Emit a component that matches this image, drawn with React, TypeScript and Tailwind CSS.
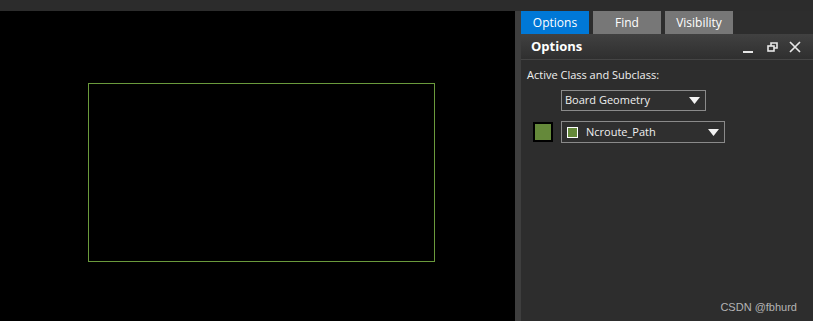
const ui = { fontFamily: '"Open Sans", "Noto Sans", sans-serif' }

function Caret() {
  return (
    <svg width="11" height="7" viewBox="0 0 11 7" className="shrink-0">
      <path d="M0 0 H11 L5.5 7 Z" fill="#f2f2f2" />
    </svg>
  )
}

function WindowButtons() {
  return (
    <div className="flex items-center text-[#e6e6e6]">
      <svg width="11" height="12" viewBox="0 0 11 12">
        <rect x="0" y="10" width="10" height="2" fill="currentColor" />
      </svg>
      <svg width="12" height="12" viewBox="0 0 12 12" fill="none" stroke="currentColor" strokeWidth="1.6" className="ml-[13px]">
        <rect x="1" y="5" width="6" height="5" />
        <path d="M4 5 V2 H10 V7 H7" />
      </svg>
      <svg width="12" height="12" viewBox="0 0 12 12" stroke="currentColor" strokeWidth="1.7" className="ml-[10px]">
        <path d="M1 1 L11 11 M11 1 L1 11" />
      </svg>
    </div>
  )
}

const tabs = ['Options', 'Find', 'Visibility']

export default function App() {
  return (
    <div className="relative flex h-[321px] w-[813px] flex-col overflow-hidden bg-[#2d2d2d]" style={ui}>
      <div className="h-[11px] shrink-0 bg-[#2c2c2c]" />

      <div className="flex min-h-0 flex-1">
        {/* drawing canvas */}
        <div className="w-[515px] shrink-0 bg-black pl-[88px] pt-[72px]">
          <div className="h-[179px] w-[347px] border border-[#6a9a3c]" />
        </div>

        <div className="w-[6px] shrink-0 bg-[#3e3e3e]" />

        {/* options panel */}
        <div className="flex flex-1 flex-col bg-[#2d2d2d]">
          <div className="flex h-[23px] shrink-0 gap-[4px]">
            {tabs.map((t, i) => (
              <div
                key={t}
                className={
                  'flex w-[68px] items-center justify-center text-[12px] text-white ' +
                  (i === 0 ? 'bg-[#0078d7]' : 'bg-[#777777]')
                }
              >
                {t}
              </div>
            ))}
          </div>

          <div className="flex h-[26px] shrink-0 items-center justify-between border-b border-[#454545] bg-gradient-to-b from-[#414141] to-[#2f2f2f] pl-[10px] pr-[12px]">
            <span className="text-[13px] font-bold text-white">Options</span>
            <WindowButtons />
          </div>

          <div className="flex flex-col pl-[6px] pt-[7px] text-[11px] text-[#f0f0f0]">
            <div className="leading-[16px]">Active Class and Subclass:</div>

            <div className="mt-[7px] ml-[34px] flex h-[21px] w-[145px] items-center justify-between border border-[#8a8a8a] bg-[#2f2f2f] pl-[3px] pr-[5px]">
              <span>Board Geometry</span>
              <Caret />
            </div>

            <div className="mt-[10px] flex items-center">
              <div className="ml-[6px] h-[20px] w-[20px] border-[2px] border-black bg-[#65893a]" />
              <div className="ml-[8px] flex h-[22px] w-[164px] items-center border border-[#8a8a8a] bg-[#2f2f2f] pl-[5px] pr-[5px]">
                <div className="h-[11px] w-[11px] border border-white bg-[#65893a]" />
                <span className="ml-[8px] flex-1">Ncroute_Path</span>
                <Caret />
              </div>
            </div>
          </div>
        </div>
      </div>

      <div
        className="absolute bottom-[6px] right-[16px] text-[11px] text-[#b4b4b4]"
        style={{ fontFamily: '"Liberation Sans", Arial, sans-serif' }}
      >
        CSDN @fbhurd
      </div>
    </div>
  )
}
